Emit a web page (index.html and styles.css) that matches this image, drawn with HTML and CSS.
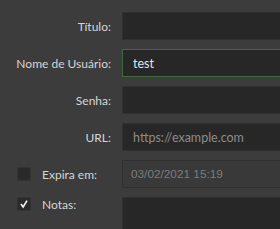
FILE: index.html
```html
<!DOCTYPE html>
<html lang="pt">

<head>
    <meta charset="UTF-8">
    <meta name="viewport" content="width=device-width, initial-scale=1.0">
    <title>Entrada</title>
    <link rel="stylesheet" href="styles.css">
</head>

<body>
    <div class="form">
        <label class="lbl">Título:</label>
        <div class="field"></div>

        <label class="lbl">Nome de Usuário:</label>
        <div class="field focus">test</div>

        <label class="lbl">Senha:</label>
        <div class="field"></div>

        <label class="lbl">URL:</label>
        <div class="field placeholder">https://example.com</div>

        <div class="check">
            <span class="box"></span>
            <span>Expira em:</span>
        </div>
        <div class="field disabled">03/02/2021 15:19</div>

        <div class="check top">
            <span class="box">
                <svg width="14" height="14" viewBox="0 0 14 14">
                    <polyline points="3.5,7 6,10.5 10.5,3" fill="none" stroke="#f2f2f2" stroke-width="1.9" />
                </svg>
            </span>
            <span>Notas:</span>
        </div>
        <div class="field area"></div>
    </div>
</body>

</html>
```

FILE: styles.css
```css
* {
    margin: 0;
    padding: 0;
    box-sizing: border-box;
}

html,
body {
    height: 100%;
    overflow: hidden;
}

body {
    background: #3c3c3c;
    font-family: "Lato", "Liberation Sans", sans-serif;
    font-size: 12.5px;
    color: #d6d6d6;
}

.form {
    display: grid;
    grid-template-columns: 94px 1fr;
    column-gap: 11px;
    row-gap: 9px;
    padding: 12px 0 0 17px;
}

.lbl {
    display: flex;
    align-items: center;
    justify-content: flex-end;
    height: 28px;
    white-space: nowrap;
    font-size: 12px;
}

.field {
    height: 28px;
    background: #272727;
    border: 1px solid #303030;
    border-right: none;
    display: flex;
    align-items: center;
    padding-left: 10px;
    color: #e6e6e6;
    white-space: nowrap;
}

.field.focus {
    border-color: #3f6b3a;
}

.field.placeholder {
    color: #8c8c8c;
}

.field.disabled {
    background: #393939;
    border-color: #303030;
    color: #7c7c7c;
    padding-left: 8px;
    font-family: "Liberation Sans", sans-serif;
    font-size: 11.8px;
}

.field.area {
    height: 32px;
    border-bottom: none;
}

.check {
    display: flex;
    align-items: center;
    gap: 11px;
    height: 28px;
    font-size: 12px;
}

.check.top {
    height: 14px;
}

.box {
    width: 14px;
    height: 14px;
    background: #2a2a2a;
    border: 1px solid #333333;
    display: flex;
    align-items: center;
    justify-content: center;
}

.box svg {
    display: block;
}
```
